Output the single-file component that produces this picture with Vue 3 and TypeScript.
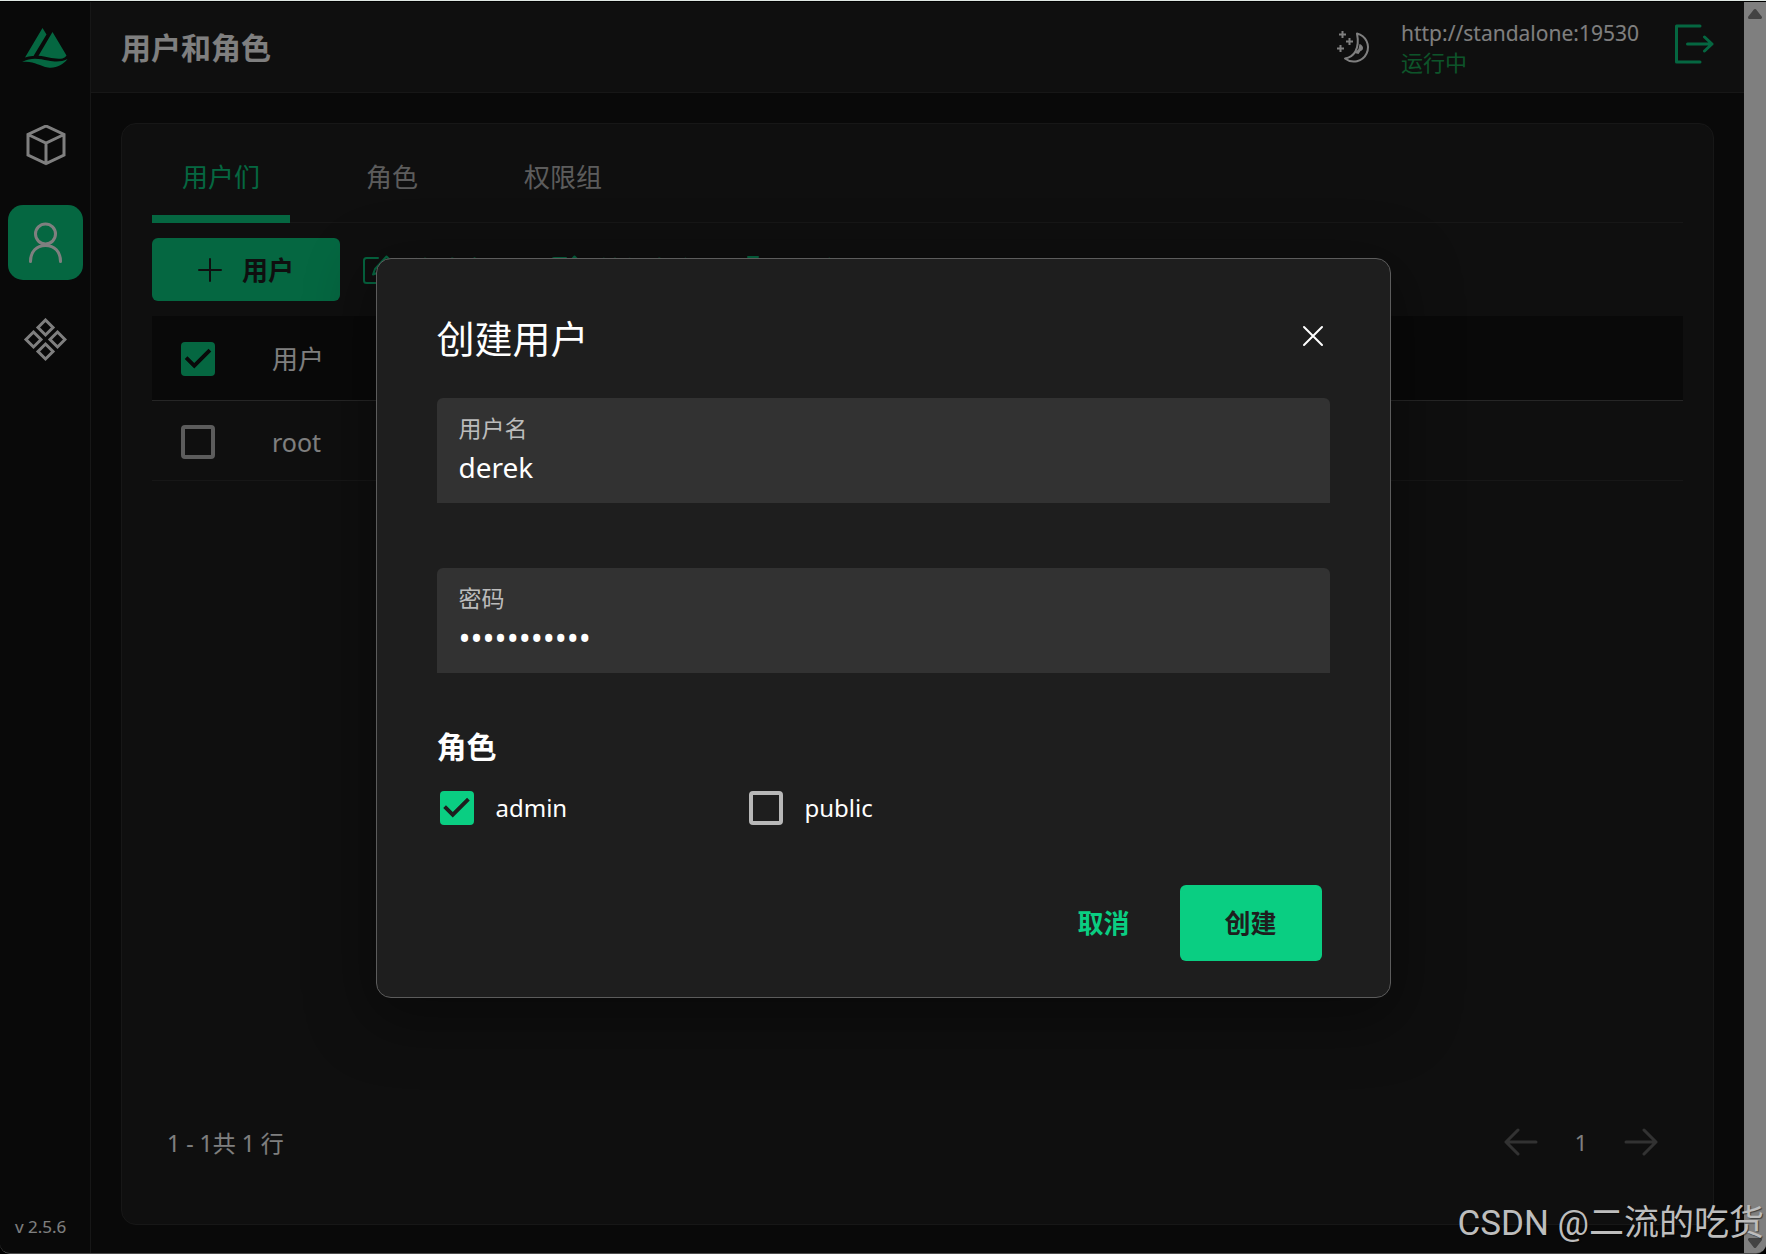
<script setup lang="ts">
import { computed, ref } from 'vue'

interface Tab {
  id: string
  label: string
}

interface UserRow {
  name: string
  selected: boolean
}

interface RoleOption {
  name: string
  checked: boolean
}

const tabs: Tab[] = [
  { id: 'users', label: '用户们' },
  { id: 'roles', label: '角色' },
  { id: 'groups', label: '权限组' },
]
const activeTab = ref('users')
const dialogOpen = ref(true)
const allSelected = ref(true)
const users = ref<UserRow[]>([{ name: 'root', selected: false }])
const username = ref('derek')
const password = ref('derek123456')
const roles = ref<RoleOption[]>([
  { name: 'admin', checked: true },
  { name: 'public', checked: false },
])
const rangeText = computed(() => `1 - ${users.value.length}共 ${users.value.length} 行`)
</script>

<template>
  <div class="window">
    <div class="shell">
      <aside class="sidebar">
        <svg class="logo" viewBox="0 0 46 40" aria-hidden="true">
          <path d="M20.500 0 24.500 6.500 11.500 28 Q7 27.800 3 29.500Z" />
          <path d="M30.500 4 44.500 27.500 Q43.500 29.500 40.500 30.500 C31 31.500 26 28.500 16.500 27.800Z" />
          <path d="M0 34 C9 29 17 30.500 26 32.500 C34 34 39 34 45.500 31 C41 37 34 40.500 26 39.500 C17 38 12 32.500 0 34Z" />
        </svg>
        <nav class="nav" aria-label="主导航">
          <a class="nav-item" href="#databases" aria-label="数据库">
            <svg width="42" height="42" viewBox="0 0 42 42">
              <path d="M22 1 40 9.500v20.500L22 38.500 4 30V9.500ZM4 9.500l18 8.500L40 9.500M22 18v20.500" />
            </svg>
          </a>
          <a class="nav-item active" href="#users" aria-label="用户" aria-current="page">
            <svg width="42" height="42" viewBox="0 0 42 42">
              <circle cx="21.500" cy="12" r="10" />
              <path d="M6.500 39.500c0-10 6-16 15-16s15 6 15 16" />
            </svg>
          </a>
          <a class="nav-item" href="#system" aria-label="系统">
            <svg width="44" height="44" viewBox="0 0 44 44">
              <path d="M22.500 2l7.500 7.500-7.500 7.500-7.500-7.500ZM22.500 26l7.500 7.500-7.500 7.500-7.500-7.500ZM10.500 14l7.500 7.500-7.500 7.500L3 21.500ZM34.500 14l7.500 7.500-7.500 7.500-7.500-7.500Z" />
            </svg>
          </a>
        </nav>
        <span class="version">v 2.5.6</span>
      </aside>

      <div class="main">
        <header class="header">
          <h1 class="page-title">用户和角色</h1>
          <button class="icon-button" type="button" aria-label="切换主题">
            <svg width="34" height="34" viewBox="0 0 34 34" fill="none" stroke="#fff" stroke-width="2">
              <path d="M20 2.500A14.200 14.200 0 1 1 8 27.500C17 26 23 18 20 2.500Z" stroke-linejoin="round" />
              <path d="M5.500 0v7M2 3.500h7M12.500 7v7M9 10.500h7M3.500 14v7M0 17.500h7" />
              <path d="M22.500 13c4 1 5 6 1 7l-2 3-4-1 4-4Z" fill="#fff" stroke="none" />
            </svg>
          </button>
          <div class="server">
            <span class="server-url">http://standalone:19530</span>
            <span class="server-state">运行中</span>
          </div>
          <button class="icon-button logout" type="button" aria-label="退出">
            <svg width="40" height="40" viewBox="0 0 40 40" fill="none" stroke="#0ace82" stroke-width="3" stroke-linecap="round" stroke-linejoin="round">
              <path d="M26 2H2.500v36H26M13.500 20H38M30.500 13l7.500 7-7.500 7" />
            </svg>
          </button>
        </header>

        <main class="card">
          <div class="tabs" role="tablist">
            <button
              v-for="tab in tabs"
              :key="tab.id"
              type="button"
              role="tab"
              class="tab"
              :class="{ active: tab.id === activeTab }"
              :aria-selected="tab.id === activeTab"
              @click="activeTab = tab.id"
            >
              {{ tab.label }}
            </button>
          </div>

          <div class="toolbar">
            <button class="button primary add" type="button" @click="dialogOpen = true">
              <svg width="24" height="24" viewBox="0 0 24 24" fill="none" stroke="currentColor" stroke-width="2" stroke-linecap="round">
                <path d="M12 1v22M1 12h22" />
              </svg>
              用户
            </button>
            <button class="button link" type="button">
              <svg width="30" height="30" viewBox="0 0 30 30" fill="none" stroke="currentColor" stroke-width="2" stroke-linecap="round" stroke-linejoin="round">
                <path d="M16 3H4.500C3 3 2 4 2 5.500v20C2 27 3 28 4.500 28h20c1.500 0 2.500-1 2.500-2.500V14" />
                <path d="M24.500 1.500l4 4L15 18l-4 1.500L13 14Z" />
              </svg>
              修改密码
            </button>
            <button class="button link" type="button">
              <svg width="30" height="30" viewBox="0 0 30 30" fill="none" stroke="currentColor" stroke-width="2" stroke-linecap="round" stroke-linejoin="round">
                <path d="M16 3H4.500C3 3 2 4 2 5.500v20C2 27 3 28 4.500 28h20c1.500 0 2.500-1 2.500-2.500V14" />
                <path d="M24.500 1.500l4 4L15 18l-4 1.500L13 14Z" />
              </svg>
              编辑角色
            </button>
            <button class="button link" type="button">
              <svg width="30" height="30" viewBox="0 0 30 30" fill="none" stroke="currentColor" stroke-width="2" stroke-linecap="round" stroke-linejoin="round">
                <path d="M10 2h10M3 7h24M6 7l2 21h14l2-21" />
              </svg>
              删除
            </button>
          </div>

          <table class="table">
            <thead>
              <tr>
                <th class="check-cell">
                  <input v-model="allSelected" class="checkbox" type="checkbox" aria-label="全选" />
                </th>
                <th>用户</th>
              </tr>
            </thead>
            <tbody>
              <tr v-for="user in users" :key="user.name">
                <td class="check-cell">
                  <input v-model="user.selected" class="checkbox" type="checkbox" :aria-label="user.name" />
                </td>
                <td>{{ user.name }}</td>
              </tr>
            </tbody>
          </table>

          <footer class="pager">
            <span class="pager-range">{{ rangeText }}</span>
            <button class="icon-button arrow" type="button" aria-label="上一页">
              <svg width="34" height="28" viewBox="0 0 34 28"><path d="M32 14H2M14 2 2 14l12 12" /></svg>
            </button>
            <span class="pager-page">1</span>
            <button class="icon-button arrow" type="button" aria-label="下一页">
              <svg width="34" height="28" viewBox="0 0 34 28"><path d="M2 14h30M20 2l12 12-12 12" /></svg>
            </button>
          </footer>
        </main>
      </div>

      <div class="scrollbar" aria-hidden="true">
        <svg width="16" height="12" viewBox="0 0 16 12"><path d="M8 2.500 13.500 9.500h-11Z" /></svg>
        <svg width="16" height="12" viewBox="0 0 16 12"><path d="M8 9.500 2.500 2.500h11Z" /></svg>
      </div>
    </div>

    <div v-if="dialogOpen" class="backdrop">
      <form class="dialog" role="dialog" aria-modal="true" aria-labelledby="dialog-title" @submit.prevent>
        <div class="dialog-head">
          <h2 id="dialog-title" class="dialog-title">创建用户</h2>
          <button class="icon-button close" type="button" aria-label="关闭" @click="dialogOpen = false">
            <svg width="22" height="22" viewBox="0 0 22 22" fill="none" stroke="#fff" stroke-width="2" stroke-linecap="round">
              <path d="M2 2l18 18M20 2 2 20" />
            </svg>
          </button>
        </div>
        <div class="field">
          <label for="username">用户名</label>
          <input id="username" v-model="username" type="text" autocomplete="off" />
        </div>
        <div class="field">
          <label for="password">密码</label>
          <input id="password" v-model="password" type="password" autocomplete="new-password" />
        </div>
        <h3 class="roles-title">角色</h3>
        <div class="roles">
          <label v-for="role in roles" :key="role.name" class="role">
            <input v-model="role.checked" class="checkbox" type="checkbox" />
            {{ role.name }}
          </label>
        </div>
        <div class="dialog-actions">
          <button class="button cancel" type="button" @click="dialogOpen = false">取消</button>
          <button class="button primary create" type="submit">创建</button>
        </div>
      </form>
    </div>

    <span class="watermark">CSDN @二流的吃货</span>
  </div>
</template>

<style>
body {
  margin: 0;
  background: #000;
}
</style>

<style scoped>
* {
  box-sizing: border-box;
}

.window {
  position: relative;
  display: flex;
  min-height: 100vh;
  overflow: hidden;
  border-top: 1px solid #dfe7e3;
  border-bottom: 1px solid #4c4c4c;
  border-radius: 0 0 10px 10px;
  color: #fff;
  background: #121212;
  font-family: 'Noto Sans', 'Noto Sans CJK SC', sans-serif;
}

.shell {
  display: flex;
  flex: 1;
  border-top: 1px solid #000;
}

h1,
h2,
h3 {
  margin: 0;
}

button,
input {
  font-family: inherit;
}

.sidebar {
  display: flex;
  flex: none;
  flex-direction: column;
  align-items: center;
  width: 91px;
  padding: 26px 0 12px;
  border-right: 1px solid #2f2f2f;
}

.logo {
  width: 46px;
  height: 40px;
  fill: #0ace82;
}

.nav {
  display: flex;
  flex-direction: column;
  gap: 22px;
  margin-top: 40px;
}

.nav-item {
  display: flex;
  align-items: center;
  justify-content: center;
  width: 75px;
  height: 75px;
  border-radius: 15px;
}

.nav-item svg {
  fill: none;
  stroke: #fff;
  stroke-width: 3;
  stroke-linecap: round;
}

.nav-item.active {
  background: #0ace82;
}

.version {
  align-self: flex-start;
  margin-top: auto;
  padding-left: 15px;
  font-size: 17px;
  line-height: 28px;
}

.main {
  display: flex;
  flex: 1;
  flex-direction: column;
  min-width: 0;
}

.header {
  display: flex;
  align-items: center;
  height: 91px;
  padding: 2px 30px 0;
  border-bottom: 1px solid #2f2f2f;
  background: #1e1e1e;
}

.page-title {
  flex: 1;
  font-size: 30px;
  line-height: 40px;
}

.icon-button {
  display: flex;
  padding: 0;
  border: 0;
  background: none;
}

.logout {
  padding-bottom: 8px;
}

.server {
  display: flex;
  flex-direction: column;
  margin: 0 35px 0 30px;
  font-size: 21px;
  line-height: 29px;
}

.server-state {
  color: #1ba954;
  font-size: 22px;
}

.card {
  display: flex;
  flex: 1;
  flex-direction: column;
  margin: 30px 30px 28px;
  padding: 0 30px;
  border: 1px solid #2f2f2f;
  border-radius: 15px;
  background: #1e1e1e;
}

.tabs {
  display: flex;
  gap: 46px;
  height: 99px;
  border-bottom: 1px solid #2f2f2f;
}

.tab {
  height: 99px;
  padding: 14px 30px 0;
  border: 0;
  border-bottom: 8px solid transparent;
  color: #b8b8b8;
  background: none;
  font-size: 26px;
  line-height: 36px;
}

.tab.active {
  border-color: #0ace82;
  color: #0ace82;
}

.toolbar {
  display: flex;
  gap: 22px;
  padding: 15px 0;
}

.button {
  display: flex;
  align-items: center;
  justify-content: center;
  border: 0;
  border-radius: 6px;
  font-size: 26px;
  font-weight: 700;
  line-height: 36px;
  white-space: nowrap;
}

.primary {
  color: #1e1e1e;
  background: #0ace82;
}

.add {
  gap: 20px;
  width: 188px;
  height: 63px;
}

.link {
  gap: 18px;
  padding: 0 14px 0 0;
  color: #0ace82;
  background: none;
  font-weight: 400;
}

.table {
  width: 100%;
  border-collapse: separate;
  border-spacing: 0;
  font-size: 25px;
  line-height: 34px;
  text-align: left;
}

th {
  height: 85px;
  padding: 2px 0 0;
  border-bottom: 1px solid #4c4c4c;
  color: #fff;
  background: #121212;
  font-size: 26px;
  font-weight: 400;
}

td {
  height: 80px;
  padding: 2px 0 0;
  border-bottom: 1px solid #2f2f2f;
}

.check-cell {
  width: 120px;
  padding-left: 29px;
}

.checkbox {
  display: block;
  flex: none;
  width: 34px;
  height: 34px;
  margin: 0;
  border: 4px solid #b8b8b8;
  border-radius: 4px;
  appearance: none;
}

.checkbox:checked {
  border: 0;
  background: #0ace82;
}

.checkbox:checked::after {
  display: block;
  width: 34px;
  height: 34px;
  background: #1e1e1e;
  clip-path: polygon(11% 50%, 19% 42%, 39% 62%, 81% 20%, 89% 28%, 39% 78%);
  content: '';
}

th .checkbox:checked::after {
  background: #121212;
}

.pager {
  display: flex;
  align-items: center;
  height: 40px;
  margin-top: auto;
  margin-bottom: 62px;
  padding: 0 25px 0 15px;
}

.pager-range {
  flex: 1;
  font-size: 23px;
}

.pager-page {
  width: 86px;
  font-size: 22px;
  text-align: center;
}

.arrow svg {
  fill: none;
  stroke: #656565;
  stroke-width: 3;
  stroke-linecap: round;
  stroke-linejoin: round;
}

.scrollbar {
  display: flex;
  flex: none;
  flex-direction: column;
  align-items: center;
  justify-content: space-between;
  width: 22px;
  padding: 6px 0 4px;
  background: #fff;
}

.scrollbar svg {
  fill: #868686;
  stroke: #868686;
  stroke-width: 3;
  stroke-linejoin: round;
}

.backdrop {
  position: absolute;
  inset: 0;
  display: flex;
  align-items: center;
  justify-content: center;
  padding-top: 2px;
  background: rgba(0, 0, 0, 0.5);
}

.dialog {
  width: 1015px;
  max-width: 90%;
  padding: 55px 60px 36px;
  border: 1px solid #5c5c5c;
  border-radius: 15px;
  background: #1e1e1e;
  box-shadow: 0 16px 60px 10px rgba(0, 0, 0, 0.35);
}

.dialog-head {
  display: flex;
  align-items: center;
  justify-content: space-between;
  margin-bottom: 36px;
}

.dialog-title {
  font-size: 38px;
  font-weight: 400;
  line-height: 48px;
}

.close {
  padding: 0 6px 4px;
}

.field {
  display: flex;
  flex-direction: column;
  gap: 4px;
  height: 105px;
  padding: 15px 22px 16px;
  border-radius: 6px 6px 0 0;
  background: #323232;
}

.field + .field {
  margin-top: 65px;
}

.field label {
  color: #bcbcbc;
  font-size: 23px;
  line-height: 30px;
}

.field input {
  width: 100%;
  height: 40px;
  padding: 0;
  border: 0;
  outline: 0;
  color: #fff;
  background: none;
  font-size: 28px;
}

.field input[type='password'] {
  font-size: 32px;
}

.roles-title {
  margin-top: 56px;
  font-size: 30px;
  line-height: 36px;
}

.roles {
  display: flex;
  margin-top: 26px;
}

.role {
  display: flex;
  align-items: center;
  gap: 22px;
  width: 309px;
  padding-left: 3px;
  font-size: 24px;
  line-height: 34px;
}

.dialog-actions {
  display: flex;
  justify-content: flex-end;
  gap: 20px;
  margin-top: 60px;
  padding-right: 8px;
}

.cancel {
  padding: 0 30px;
  color: #0ace82;
  background: none;
}

.create {
  width: 142px;
  height: 76px;
}

.watermark {
  position: absolute;
  right: 2px;
  bottom: 4px;
  color: #bdbdbd;
  font-family: Roboto, 'Noto Sans CJK SC', sans-serif;
  font-size: 35px;
  line-height: 50px;
  text-shadow: 1px 1px 1px rgba(0, 0, 0, 0.5);
}
</style>
